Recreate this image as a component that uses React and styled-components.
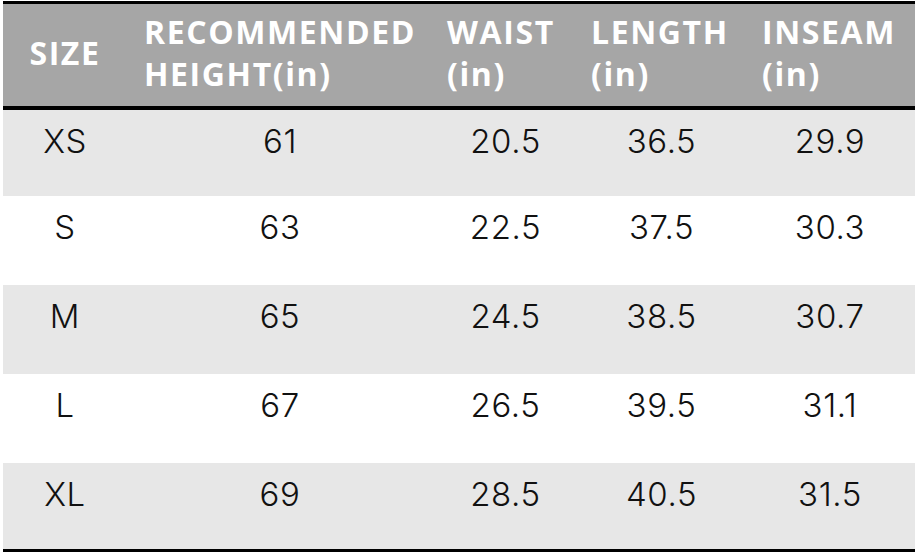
import React from 'react';
import styled, { createGlobalStyle } from 'styled-components';

const GlobalStyle = createGlobalStyle`
  html, body {
    margin: 0;
    padding: 0;
    background: #ffffff;
  }
`;

const columns = [
  { key: 'size', label: ['SIZE'], width: 124, center: true },
  { key: 'height', label: ['RECOMMENDED', 'HEIGHT(in)'], width: 306 },
  { key: 'waist', label: ['WAIST', '(in)'], width: 145 },
  { key: 'length', label: ['LENGTH', '(in)'], width: 167 },
  { key: 'inseam', label: ['INSEAM', '(in)'], width: 170 },
];

const rows = [
  ['XS', '61', '20.5', '36.5', '29.9'],
  ['S', '63', '22.5', '37.5', '30.3'],
  ['M', '65', '24.5', '38.5', '30.7'],
  ['L', '67', '26.5', '39.5', '31.1'],
  ['XL', '69', '28.5', '40.5', '31.5'],
];

const Page = styled.div`
  width: 918px;
  height: 553px;
  padding: 1px 3px 0 3px;
  box-sizing: border-box;
  background: #ffffff;
`;

const Table = styled.div`
  width: 912px;
  border-top: 3px solid #000000;
  border-bottom: 3px solid #000000;
`;

const HeaderRow = styled.div`
  display: grid;
  grid-template-columns: ${columns.map((c) => c.width + 'px').join(' ')};
  height: 102px;
  background: #a6a6a6;
  border-bottom: 4px solid #000000;
`;

const HeaderCell = styled.div`
  display: flex;
  flex-direction: column;
  justify-content: center;
  align-items: ${(p) => (p.$center ? 'center' : 'flex-start')};
  padding-left: ${(p) => (p.$center ? '0' : p.$pad + 'px')};
  padding-bottom: 4px;
  color: #ffffff;
  font-family: "Open Sans", "Noto Sans", sans-serif;
  font-weight: 700;
  font-size: 32px;
  line-height: 42px;
  letter-spacing: 1.6px;
`;

const BodyRow = styled.div`
  display: grid;
  grid-template-columns: ${columns.map((c) => c.width + 'px').join(' ')};
  height: ${(p) => p.$h}px;
  background: ${(p) => (p.$shade ? '#e7e7e7' : '#ffffff')};
`;

const Cell = styled.div`
  display: flex;
  justify-content: center;
  padding-top: 9px;
  color: #111111;
  font-family: Inter, "Noto Sans", sans-serif;
  font-weight: 300;
  font-size: 33px;
  line-height: 44px;
  letter-spacing: 0.6px;
`;

const pads = [0, 17, 14, 13, 17];
const heights = [86, 89, 89, 89, 86];

export default function App() {
  return (
    <>
      <GlobalStyle />
      <Page>
        <Table>
          <HeaderRow>
            {columns.map((c, i) => (
              <HeaderCell key={c.key} $center={c.center} $pad={pads[i]}>
                {c.label.map((l) => (
                  <span key={l}>{l}</span>
                ))}
              </HeaderCell>
            ))}
          </HeaderRow>
          {rows.map((r, i) => (
            <BodyRow key={r[0]} $shade={i % 2 === 0} $h={heights[i]}>
              {r.map((v, j) => (
                <Cell key={j}>{v}</Cell>
              ))}
            </BodyRow>
          ))}
        </Table>
      </Page>
    </>
  );
}
